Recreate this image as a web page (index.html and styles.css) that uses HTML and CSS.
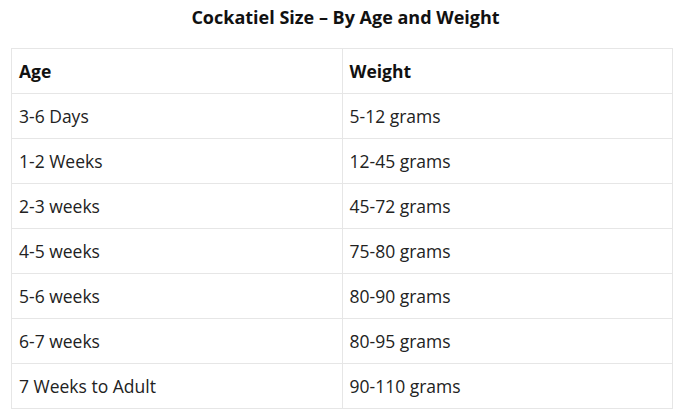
FILE: index.html
```html
<!DOCTYPE html>
<html>
<head>
<meta charset="utf-8">
<link rel="stylesheet" href="styles.css">
</head>
<body>
<div class="page">
  <h2 class="title">Cockatiel Size – By Age and Weight</h2>
  <table class="size-table">
    <thead>
      <tr><th>Age</th><th>Weight</th></tr>
    </thead>
    <tbody>
      <tr><td>3-6 Days</td><td>5-12 grams</td></tr>
      <tr><td>1-2 Weeks</td><td>12-45 grams</td></tr>
      <tr><td>2-3 weeks</td><td>45-72 grams</td></tr>
      <tr><td>4-5 weeks</td><td>75-80 grams</td></tr>
      <tr><td>5-6 weeks</td><td>80-90 grams</td></tr>
      <tr><td>6-7 weeks</td><td>80-95 grams</td></tr>
      <tr><td>7 Weeks to Adult</td><td>90-110 grams</td></tr>
    </tbody>
  </table>
</div>
</body>
</html>
```
FILE: styles.css
```css
html, body {
  margin: 0;
  padding: 0;
  background: #ffffff;
}
.page {
  width: 691px;
  font-family: "Open Sans", "Noto Sans", sans-serif;
  color: #222;
}
.title {
  margin: 0;
  height: 48px;
  line-height: 34px;
  font-size: 18px;
  font-weight: 700;
  text-align: center;
  color: #111;
}
.size-table {
  margin-left: 11px;
  width: 662px;
  border-collapse: collapse;
  table-layout: fixed;
}
.size-table th,
.size-table td {
  border: 1px solid #e6e6e6;
  height: 44px;
  padding: 0 0 0 7px;
  text-align: left;
  font-size: 17.5px;
  vertical-align: middle;
}
.size-table th {
  font-weight: 700;
  color: #111;
}
```
